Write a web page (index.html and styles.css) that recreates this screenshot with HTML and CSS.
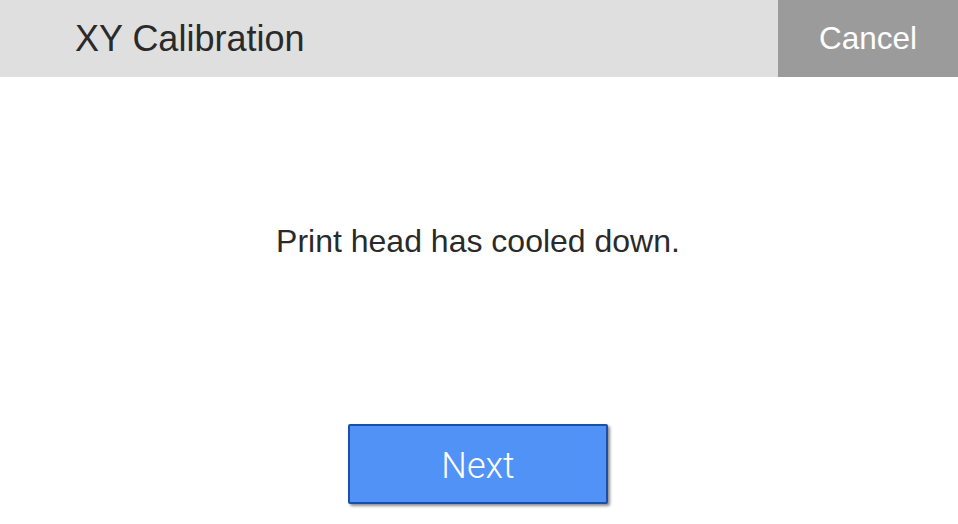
FILE: index.html
```html
<!DOCTYPE html>
<html lang="en">
<head>
    <meta charset="UTF-8">
    <title>XY Calibration</title>
    <link rel="stylesheet" href="styles.css">
</head>
<body>
    <div class="screen">
        <header class="top-bar">
            <h1 class="top-title">XY Calibration</h1>
            <button class="cancel-btn">Cancel</button>
        </header>

        <main class="content">
            <p class="message">Print head has cooled down.</p>
            <button class="next-btn">Next</button>
        </main>
    </div>
</body>
</html>
```

FILE: styles.css
```css
* {
    margin: 0;
    padding: 0;
    box-sizing: border-box;
}

body {
    font-family: 'Liberation Sans', Arial, sans-serif;
    background: #ffffff;
    color: #2a2a2a;
    width: 958px;
    height: 524px;
    overflow: hidden;
}

.screen {
    display: flex;
    flex-direction: column;
    height: 100%;
}

.top-bar {
    display: flex;
    height: 77px;
    background: #dfdfdf;
}

.top-title {
    flex: 1;
    display: flex;
    align-items: center;
    padding-left: 75px;
    font-size: 36px;
    font-weight: 400;
    line-height: 1;
    color: #2a2a2a;
}

.cancel-btn {
    width: 180px;
    border: none;
    background: #9b9b9b;
    color: #ffffff;
    font-family: 'Liberation Sans', Arial, sans-serif;
    font-size: 31.5px;
    cursor: pointer;
}

.content {
    display: flex;
    flex-direction: column;
    align-items: center;
    padding-right: 2px;
}

.message {
    margin-top: 147px;
    font-size: 32px;
    line-height: 34px;
    color: #2a2a2a;
}

.next-btn {
    margin-top: 166px;
    width: 260px;
    height: 80px;
    padding-top: 3px;
    background: #5192f7;
    border: 2px solid #1c4fa9;
    border-radius: 2px;
    box-shadow: 2px 2px 3px rgba(0, 0, 0, 0.45);
    color: #ffffff;
    font-family: Roboto, 'Liberation Sans', sans-serif;
    font-weight: 300;
    font-size: 36px;
    cursor: pointer;
}
```
